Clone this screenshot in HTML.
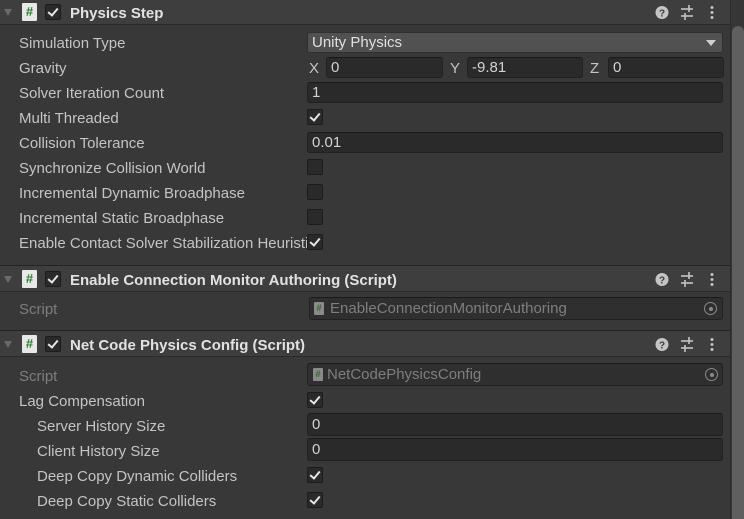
<!DOCTYPE html>
<html><head><meta charset="utf-8"><style>
*{margin:0;padding:0;box-sizing:border-box}
body{width:744px;height:519px;background:#383838;font-family:"Liberation Sans",sans-serif;overflow:hidden;position:relative;color:#c4c4c4}
.a{position:absolute}
.hdr{position:absolute;left:0;width:730px;height:25px;background:#3e3e3e;border-bottom:1px solid #2a2a2a}
.sep{position:absolute;left:0;width:730px;height:1px;background:#232323}
.tri{position:absolute;left:4px;width:0;height:0;border-left:4px solid transparent;border-right:4px solid transparent;border-top:7px solid #6a6a6a}
.fi{position:absolute;width:15px;height:18px;background:#e8e8e8;border-radius:1px;color:#2f7d32;font-weight:bold;font-size:13px;text-align:center;line-height:18px}
.cb{position:absolute;width:16px;height:16px;background:#2a2a2a;border:1px solid #1c1c1c;border-radius:2px}
.cb.on::after{content:"";position:absolute;left:4px;top:1px;width:4px;height:8px;border:solid #e6e6e6;border-width:0 2px 2px 0;transform:rotate(40deg)}
.title{position:absolute;left:70px;font-weight:bold;font-size:15px;color:#e2e2e2}
.lbl{position:absolute;font-size:15px;color:#c4c4c4;white-space:nowrap}
.f{position:absolute;height:21px;background:#2a2a2a;border:1px solid #212121;border-top-color:#1a1a1a;border-radius:3px;font-size:15px;color:#d2d2d2;padding-left:4px;line-height:20px}
.dim{color:#7e7e7e}
.si{position:absolute;width:10px;height:13px;background:#8a8a8a;border-radius:1px;color:#2f6a30;font-size:9px;font-weight:bold;text-align:center;line-height:13px}
</style></head><body>

<div class="a" style="left:730px;top:0;width:14px;height:519px;background:#363636;border-left:1px solid #2b2b2b"></div>
<div class="a" style="left:732px;top:26px;width:12px;height:493px;background:#5f5f5f;border-radius:6px 6px 0 0"></div>

<div class="hdr" style="top:0"></div>
<div class="tri" style="top:9px"></div>
<div class="fi" style="left:22px;top:3px">#</div>
<div class="cb on" style="left:45px;top:4px"></div>
<div class="title" style="top:5px">Physics Step</div>

<svg class="a" style="left:650px;top:0" width="80" height="25">
<circle cx="12" cy="12.5" r="6.5" fill="#c4c4c4"/><text x="12" y="16.5" text-anchor="middle" font-size="10" font-weight="bold" fill="#3e3e3e" font-family="Liberation Sans">?</text>
<g stroke="#c4c4c4" stroke-width="1.6"><line x1="31" y1="9" x2="43" y2="9"/><line x1="31" y1="16" x2="43" y2="16"/><line x1="39" y1="5" x2="39" y2="12"/><line x1="35" y1="13" x2="35" y2="20"/></g>
<g fill="#c4c4c4"><circle cx="62" cy="7.5" r="1.5"/><circle cx="62" cy="12.5" r="1.5"/><circle cx="62" cy="17.5" r="1.5"/></g>
</svg>

<div class="lbl" style="left:19px;top:35px">Simulation Type</div>
<div class="f" style="left:307px;top:32px;width:416px;background:#515151;border-color:#303030;color:#e0e0e0">Unity Physics</div>
<div class="a" style="left:706px;top:40px;border-left:5px solid transparent;border-right:5px solid transparent;border-top:6px solid #d0d0d0"></div>

<div class="lbl" style="left:19px;top:60px">Gravity</div>
<div class="lbl" style="left:309px;top:60px">X</div>
<div class="f" style="left:326px;top:57px;width:117px">0</div>
<div class="lbl" style="left:450px;top:60px">Y</div>
<div class="f" style="left:467px;top:57px;width:116px">-9.81</div>
<div class="lbl" style="left:590px;top:60px">Z</div>
<div class="f" style="left:608px;top:57px;width:116px">0</div>

<div class="lbl" style="left:19px;top:85px">Solver Iteration Count</div>
<div class="f" style="left:307px;top:82px;width:416px">1</div>

<div class="lbl" style="left:19px;top:110px">Multi Threaded</div>
<div class="cb on" style="left:307px;top:109px"></div>

<div class="lbl" style="left:19px;top:135px">Collision Tolerance</div>
<div class="f" style="left:307px;top:132px;width:416px">0.01</div>

<div class="lbl" style="left:19px;top:160px">Synchronize Collision World</div>
<div class="cb" style="left:307px;top:159px"></div>
<div class="lbl" style="left:19px;top:185px">Incremental Dynamic Broadphase</div>
<div class="cb" style="left:307px;top:184px"></div>
<div class="lbl" style="left:19px;top:210px">Incremental Static Broadphase</div>
<div class="cb" style="left:307px;top:209px"></div>
<div class="lbl" style="left:19px;top:235px;width:288px;overflow:hidden">Enable Contact Solver Stabilization Heuristic</div>
<div class="cb on" style="left:307px;top:234px"></div>

<div class="sep" style="top:265px"></div>
<div class="hdr" style="top:266px;height:26px"></div>
<div class="tri" style="top:276px"></div>
<div class="fi" style="left:22px;top:270px">#</div>
<div class="cb on" style="left:45px;top:271px"></div>
<div class="title" style="top:272px">Enable Connection Monitor Authoring (Script)</div>
<svg class="a" style="left:650px;top:267px" width="80" height="25">
<circle cx="12" cy="12.5" r="6.5" fill="#c4c4c4"/><text x="12" y="16.5" text-anchor="middle" font-size="10" font-weight="bold" fill="#3e3e3e" font-family="Liberation Sans">?</text>
<g stroke="#c4c4c4" stroke-width="1.6"><line x1="31" y1="9" x2="43" y2="9"/><line x1="31" y1="16" x2="43" y2="16"/><line x1="39" y1="5" x2="39" y2="12"/><line x1="35" y1="13" x2="35" y2="20"/></g>
<g fill="#c4c4c4"><circle cx="62" cy="7.5" r="1.5"/><circle cx="62" cy="12.5" r="1.5"/><circle cx="62" cy="17.5" r="1.5"/></g>
</svg>
<div class="lbl dim" style="left:19px;top:301px">Script</div>
<div class="f" style="left:309px;top:297px;width:414px;height:23px;background:#2f2f2f;color:#7e7e7e;line-height:22px;padding-left:20px">EnableConnectionMonitorAuthoring</div>
<div class="si" style="left:314px;top:302px">#</div>
<div class="a" style="left:704px;top:302px;width:13px;height:13px;border:1.5px solid #8a8a8a;border-radius:50%"></div>
<div class="a" style="left:709px;top:307px;width:4px;height:4px;background:#8a8a8a;border-radius:50%"></div>

<div class="sep" style="top:330px"></div>
<div class="hdr" style="top:331px;height:26px"></div>
<div class="tri" style="top:341px"></div>
<div class="fi" style="left:22px;top:335px">#</div>
<div class="cb on" style="left:45px;top:336px"></div>
<div class="title" style="top:337px">Net Code Physics Config (Script)</div>
<svg class="a" style="left:650px;top:332px" width="80" height="25">
<circle cx="12" cy="12.5" r="6.5" fill="#c4c4c4"/><text x="12" y="16.5" text-anchor="middle" font-size="10" font-weight="bold" fill="#3e3e3e" font-family="Liberation Sans">?</text>
<g stroke="#c4c4c4" stroke-width="1.6"><line x1="31" y1="9" x2="43" y2="9"/><line x1="31" y1="16" x2="43" y2="16"/><line x1="39" y1="5" x2="39" y2="12"/><line x1="35" y1="13" x2="35" y2="20"/></g>
<g fill="#c4c4c4"><circle cx="62" cy="7.5" r="1.5"/><circle cx="62" cy="12.5" r="1.5"/><circle cx="62" cy="17.5" r="1.5"/></g>
</svg>
<div class="lbl dim" style="left:19px;top:368px">Script</div>
<div class="f" style="left:307px;top:363px;width:416px;height:23px;background:#2f2f2f;color:#7e7e7e;line-height:22px;padding-left:19px">NetCodePhysicsConfig</div>
<div class="si" style="left:313px;top:368px">#</div>
<div class="a" style="left:705px;top:368px;width:13px;height:13px;border:1.5px solid #8a8a8a;border-radius:50%"></div>
<div class="a" style="left:710px;top:373px;width:4px;height:4px;background:#8a8a8a;border-radius:50%"></div>

<div class="lbl" style="left:19px;top:393px">Lag Compensation</div>
<div class="cb on" style="left:307px;top:392px"></div>
<div class="lbl" style="left:37px;top:418px">Server History Size</div>
<div class="f" style="left:307px;top:413px;width:416px;height:23px;line-height:22px">0</div>
<div class="lbl" style="left:37px;top:443px">Client History Size</div>
<div class="f" style="left:307px;top:438px;width:416px;height:23px;line-height:22px">0</div>
<div class="lbl" style="left:37px;top:468px">Deep Copy Dynamic Colliders</div>
<div class="cb on" style="left:307px;top:467px"></div>
<div class="lbl" style="left:37px;top:493px">Deep Copy Static Colliders</div>
<div class="cb on" style="left:307px;top:492px"></div>
</body></html>
